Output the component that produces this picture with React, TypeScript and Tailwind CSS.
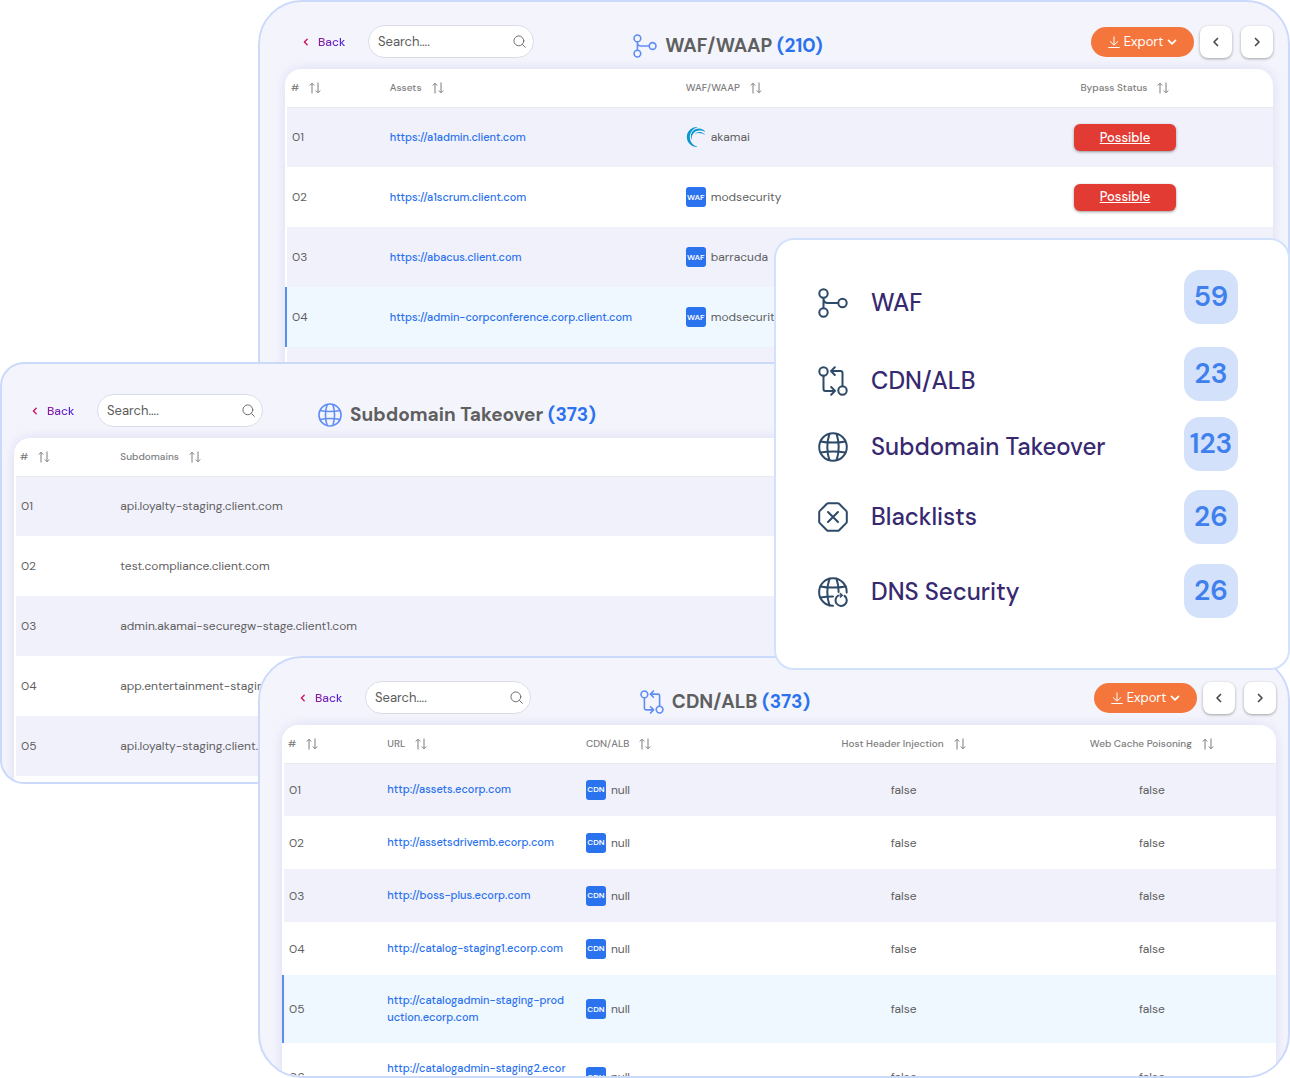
import type { ReactNode } from "react";
import clsx from "clsx";
import { SiAkamai } from "react-icons/si";

type IconProps = { className?: string };

type Column = { label: string; width: string; center?: boolean };

type Row = { id: string; cells: ReactNode[]; active?: boolean };

function BranchIcon({ className }: IconProps) {
  return (
    <svg viewBox="0 0 30 30" fill="none" stroke="currentColor" strokeWidth="2" className={className} aria-hidden="true">
      <circle cx="5.5" cy="5.5" r="4.2" />
      <circle cx="5.5" cy="24.5" r="4.2" />
      <circle cx="24.5" cy="15" r="4.2" />
      <path d="M5.5 9.7v10.6M5.5 10.5c0 3 1.6 4.5 4.5 4.5h10.3" />
    </svg>
  );
}

function CompareIcon({ className }: IconProps) {
  return (
    <svg
      viewBox="0 0 30 30"
      fill="none"
      stroke="currentColor"
      strokeWidth="2"
      strokeLinecap="round"
      strokeLinejoin="round"
      className={className}
      aria-hidden="true"
    >
      <circle cx="5.5" cy="5.5" r="4.2" />
      <circle cx="24.5" cy="24.5" r="4.2" />
      <path d="M5.5 9.7v13.2a2 2 0 0 0 2 2H17M13.2 21l3.8 3.9-3.8 3.9" />
      <path d="M24.5 20.3V7.1a2 2 0 0 0-2-2H13M16.8 1.2L13 5.1 16.8 9" />
    </svg>
  );
}

function GlobeIcon({ className }: IconProps) {
  return (
    <svg viewBox="0 0 30 30" fill="none" stroke="currentColor" strokeWidth="2" className={className} aria-hidden="true">
      <circle cx="15" cy="15" r="13.8" />
      <path d="M11.5 1.6c-2.8 8.5-2.8 18.3 0 26.8M18.5 1.6c2.8 8.5 2.8 18.3 0 26.8" />
      <path d="M2.4 9.4c8.2 1.5 17 1.5 25.2 0M2.4 20.6c8.2-1.5 17-1.5 25.2 0" />
    </svg>
  );
}

function GlobeRefreshIcon({ className }: IconProps) {
  return (
    <svg
      viewBox="0 0 30 30"
      fill="none"
      stroke="currentColor"
      strokeWidth="2"
      strokeLinecap="round"
      className={className}
      aria-hidden="true"
    >
      <path d="M28.7 15.5A13.8 13.8 0 1 0 15 28.8" />
      <path d="M11.5 1.6c-2.8 8.5-2.8 18.3 0 26.8M18.5 1.6c1.5 4.6 2.2 9.2 2.1 13.4" />
      <path d="M2.4 9.4c8.2 1.5 17 1.5 25.2 0M2.4 20.6c4.4-.8 8.4-1.1 12.6-1.1" />
      <path d="M20.3 18.5a5.6 5.6 0 1 0 6.3.4" />
      <path d="M22.5 16.4l2.4 1.9-2.4 2z" fill="currentColor" strokeWidth="1" />
    </svg>
  );
}

function OctagonIcon({ className }: IconProps) {
  return (
    <svg
      viewBox="0 0 30 30"
      fill="none"
      stroke="currentColor"
      strokeWidth="2"
      strokeLinecap="round"
      strokeLinejoin="round"
      className={className}
      aria-hidden="true"
    >
      <path d="M10.3 1.2h9.4a2 2 0 0 1 1.4.6l7.1 7.1a2 2 0 0 1 .6 1.4v9.4a2 2 0 0 1-.6 1.4l-7.1 7.1a2 2 0 0 1-1.4.6h-9.4a2 2 0 0 1-1.4-.6l-7.1-7.1a2 2 0 0 1-.6-1.4v-9.4a2 2 0 0 1 .6-1.4l7.1-7.1a2 2 0 0 1 1.4-.6z" />
      <path d="M10 10l10 10M20 10L10 20" />
    </svg>
  );
}

function SortIcon() {
  return (
    <svg viewBox="0 0 12 12" fill="none" stroke="currentColor" className="h-3 w-3 shrink-0" aria-hidden="true">
      <path d="M3 11.5V1.5M.8 3.5L3 1.2l2.2 2.3M9 .5v10M6.8 8.5L9 10.8l2.2-2.3" />
    </svg>
  );
}

function Chevron({ d, className }: { d: string; className?: string }) {
  return (
    <svg
      viewBox="0 0 10 10"
      fill="none"
      stroke="currentColor"
      strokeWidth="1.7"
      strokeLinecap="round"
      strokeLinejoin="round"
      className={className}
      aria-hidden="true"
    >
      <path d={d} />
    </svg>
  );
}

const LEFT = "M6.5 1.5L3 5l3.5 3.5";
const RIGHT = "M3.5 1.5L7 5 3.5 8.5";
const DOWN = "M1.5 3.3L5 6.8l3.5-3.5";

function Tag({ children }: { children: string }) {
  return (
    <span className="flex h-5 w-5 shrink-0 items-center justify-center rounded-[3px] bg-[#2a72ee] text-[8px] font-semibold text-white">
      {children}
    </span>
  );
}

function Vendor({ tag, name }: { tag?: string; name: string }) {
  return (
    <span className="flex items-center gap-[5px]">
      {tag ? <Tag>{tag}</Tag> : <SiAkamai className="h-5 w-5 shrink-0 text-[#0b98d0]" aria-hidden="true" />}
      {name}
    </span>
  );
}

function AssetLink({ url, wrap }: { url: string; wrap?: boolean }) {
  return (
    <a
      href={url}
      className={clsx(
        "block py-[17px] text-[11px] leading-[17px] font-medium text-[#2a72ee]",
        wrap ? "max-w-[180px] break-all" : "whitespace-nowrap",
      )}
    >
      {url}
    </a>
  );
}

function PossibleLink() {
  return (
    <a
      href="#bypass"
      className="inline-flex h-[27px] w-[102px] items-center justify-center rounded-md bg-[#e13b33] text-[13px] font-medium text-white underline shadow-[0_1px_3px_rgba(0,0,0,0.4)]"
    >
      Possible
    </a>
  );
}

function PanelHeader({
  id,
  icon,
  title,
  count,
  actions = true,
}: {
  id: string;
  icon: ReactNode;
  title: string;
  count: number;
  actions?: boolean;
}) {
  return (
    <header className="flex h-[33px] items-center pl-[17px]">
      <button type="button" className="flex w-[66px] shrink-0 items-center gap-2 text-xs font-medium">
        <Chevron d={LEFT} className="h-2 w-2 text-[#c9155f]" />
        <span className="bg-linear-to-r from-[#90189c] to-[#4a1bdc] bg-clip-text text-transparent">Back</span>
      </button>
      <div className="relative w-[166px] shrink-0">
        <label htmlFor={id} className="sr-only">
          Search {title}
        </label>
        <input
          id={id}
          type="text"
          placeholder="Search...."
          className="h-[33px] w-full rounded-full border border-[#d9dce6] bg-white pr-8 pl-[9px] text-[13px] text-[#5c5c5c] outline-none placeholder:text-[#5c5c5c]"
        />
        <svg
          viewBox="0 0 14 14"
          fill="none"
          stroke="#666"
          strokeLinecap="round"
          className="absolute top-[10px] right-2 h-[13px] w-[13px]"
          aria-hidden="true"
        >
          <circle cx="6.3" cy="6.3" r="5.3" />
          <path d="M10.3 10.3l3 3" />
        </svg>
      </div>
      <h2 className="flex h-6 w-[388px] items-center justify-center gap-2 self-end text-[19px] font-bold whitespace-nowrap text-[#5f5f5f]">
        {icon}
        <span>
          {title} <span className="text-[#2a72ee]">({count})</span>
        </span>
      </h2>
      {actions && (
        <div className="ml-auto flex items-center">
          <button
            type="button"
            className="mr-1.5 flex h-[30px] w-[103px] items-center justify-center gap-1 rounded-full bg-[#f4763d] text-[13px] text-white"
          >
            <svg viewBox="0 0 12 12" fill="none" stroke="currentColor" className="h-3 w-3" aria-hidden="true">
              <path d="M6 .5v8.5M2 5.3L6 9.2l4-3.9M.3 11.5h11.4" />
            </svg>
            Export
            <Chevron d={DOWN} className="h-2.5 w-2.5" />
          </button>
          <button
            type="button"
            aria-label="Previous page"
            className="mr-[9px] flex h-8 w-8 items-center justify-center rounded-lg bg-white text-[#4c4c4c] shadow-[0_1px_3px_rgba(0,0,0,0.35)]"
          >
            <Chevron d={LEFT} className="h-2.5 w-2.5" />
          </button>
          <button
            type="button"
            aria-label="Next page"
            className="flex h-8 w-8 items-center justify-center rounded-lg bg-white text-[#4c4c4c] shadow-[0_1px_3px_rgba(0,0,0,0.35)]"
          >
            <Chevron d={RIGHT} className="h-2.5 w-2.5" />
          </button>
        </div>
      )}
    </header>
  );
}

function DataTable({ columns, rows, rowClass }: { columns: Column[]; rows: Row[]; rowClass: string }) {
  return (
    <div className="mt-[11px] overflow-hidden rounded-t-2xl bg-white shadow-[0_0_14px_rgba(80,80,190,0.14)]">
      <table className="w-full table-fixed border-collapse text-left text-xs text-[#5f5f5f]">
        <thead>
          <tr className="h-[38px] border-b border-[#e9eaf0] text-[10px] text-[#7d7d7d]">
            {columns.map((col) => (
              <th key={col.label} scope="col" className={clsx("px-[5px] font-medium", col.width)}>
                <span className={clsx("flex items-center gap-2.5 whitespace-nowrap", col.center && "justify-center")}>
                  {col.label}
                  <SortIcon />
                </span>
              </th>
            ))}
          </tr>
        </thead>
        <tbody>
          {rows.map((row, i) => (
            <tr
              key={row.id}
              className={clsx(row.active ? "bg-[#eff7ff]" : i % 2 === 0 ? "bg-[#f1f1fb]" : "bg-white", rowClass)}
            >
              <td className={clsx("border-l-2 px-[5px]", row.active ? "border-[#5b8def]" : "border-white")}>{row.id}</td>
              {row.cells.map((cell, c) => (
                <td key={c} className={clsx("px-[5px]", columns[c + 1].center && "text-center")}>
                  {cell}
                </td>
              ))}
            </tr>
          ))}
        </tbody>
      </table>
    </div>
  );
}

const wafRows: Row[] = [
  { id: "01", cells: [<AssetLink url="https://a1admin.client.com" />, <Vendor name="akamai" />, <PossibleLink />] },
  {
    id: "02",
    cells: [<AssetLink url="https://a1scrum.client.com" />, <Vendor tag="WAF" name="modsecurity" />, <PossibleLink />],
  },
  { id: "03", cells: [<AssetLink url="https://abacus.client.com" />, <Vendor tag="WAF" name="barracuda" />, null] },
  {
    id: "04",
    active: true,
    cells: [
      <AssetLink url="https://admin-corpconference.corp.client.com" />,
      <Vendor tag="WAF" name="modsecurity" />,
      null,
    ],
  },
  { id: "", cells: [null, null, null] },
];

const takeoverRows: Row[] = [
  { id: "01", cells: ["api.loyalty-staging.client.com"] },
  { id: "02", cells: ["test.compliance.client.com"] },
  { id: "03", cells: ["admin.akamai-securegw-stage.client1.com"] },
  { id: "04", cells: ["app.entertainment-staging.client.com"] },
  { id: "05", cells: ["api.loyalty-staging.client.com"] },
  { id: "", cells: [null] },
];

const cdnRows: Row[] = [
  "http://assets.ecorp.com",
  "http://assetsdrivemb.ecorp.com",
  "http://boss-plus.ecorp.com",
  "http://catalog-staging1.ecorp.com",
  "http://catalogadmin-staging-production.ecorp.com",
  "http://catalogadmin-staging2.ecorp.com",
].map((url, i) => ({
  id: `0${i + 1}`,
  active: i === 4,
  cells: [<AssetLink url={url} wrap />, <Vendor tag="CDN" name="null" />, "false", "false"],
}));

const summary = [
  { label: "WAF", count: 59, Icon: BranchIcon },
  { label: "CDN/ALB", count: 23, Icon: CompareIcon },
  { label: "Subdomain Takeover", count: 123, Icon: GlobeIcon },
  { label: "Blacklists", count: 26, Icon: OctagonIcon },
  { label: "DNS Security", count: 26, Icon: GlobeRefreshIcon },
];

const panel = "relative overflow-hidden border-2 border-[#cbdafb] bg-[#f4f5fc]";

export default function App() {
  return (
    <main className="relative overflow-hidden bg-white font-['DM_Sans',Inter,sans-serif]">
      <section className={clsx(panel, "ml-[20%] h-[420px] rounded-[44px] pt-[23px] pr-[15px] pl-[25px]")}>
        <PanelHeader id="search-waf" icon={<BranchIcon className="h-6 w-6 text-[#5f8df5]" />} title="WAF/WAAP" count={210} />
        <DataTable
          rowClass="h-[60px]"
          columns={[
            { label: "#", width: "w-[10%]" },
            { label: "Assets", width: "w-[30%]" },
            { label: "WAF/WAAP", width: "w-[30%]" },
            { label: "Bypass Status", width: "w-[30%]", center: true },
          ]}
          rows={wafRows}
        />
      </section>

      <section className={clsx(panel, "-mt-[58px] h-[422px] w-4/5 rounded-3xl pt-[30px] pr-3 pl-3")}>
        <PanelHeader
          id="search-takeover"
          icon={<GlobeIcon className="h-6 w-6 text-[#5f8df5]" />}
          title="Subdomain Takeover"
          count={373}
          actions={false}
        />
        <DataTable
          rowClass="h-[60px]"
          columns={[
            { label: "#", width: "w-[10%]" },
            { label: "Subdomains", width: "w-[90%]" },
          ]}
          rows={takeoverRows}
        />
      </section>

      <section className={clsx(panel, "-mt-32 ml-[20%] h-[422px] rounded-[44px] pt-[23px] pr-3 pl-[22px]")}>
        <PanelHeader id="search-cdn" icon={<CompareIcon className="h-6 w-6 text-[#5f8df5]" />} title="CDN/ALB" count={373} />
        <DataTable
          rowClass="h-[53px]"
          columns={[
            { label: "#", width: "w-[10%]" },
            { label: "URL", width: "w-1/5" },
            { label: "CDN/ALB", width: "w-1/5" },
            { label: "Host Header Injection", width: "w-1/4", center: true },
            { label: "Web Cache Poisoning", width: "w-1/4", center: true },
          ]}
          rows={cdnRows}
        />
      </section>

      {/* totals card floating over the three panels */}
      <aside className="absolute top-[238px] right-0 flex h-[432px] w-2/5 justify-between rounded-[20px] border-2 border-[#d3e2fc] bg-white pt-[30px] pr-[50px] pl-[42px]">
        <ul className="grid grid-rows-[78px_66px_70px_75px_54px] content-start pt-1.5 text-2xl font-medium text-[#37296f]">
          {summary.map(({ label, Icon }) => (
            <li key={label} className="flex h-[54px] items-center gap-[23px] whitespace-nowrap">
              <Icon className="h-[30px] w-[30px] shrink-0 text-[#2d4a68]" />
              {label}
            </li>
          ))}
        </ul>
        <ul className="grid grid-rows-[77px_70px_73px_74px_54px] content-start text-[28px] font-semibold text-[#3f80ee]">
          {summary.map(({ label, count }) => (
            <li key={label} className="flex h-[54px] w-[54px] items-center justify-center rounded-2xl bg-[#d4e1fb]">
              {count}
            </li>
          ))}
        </ul>
      </aside>
    </main>
  );
}
